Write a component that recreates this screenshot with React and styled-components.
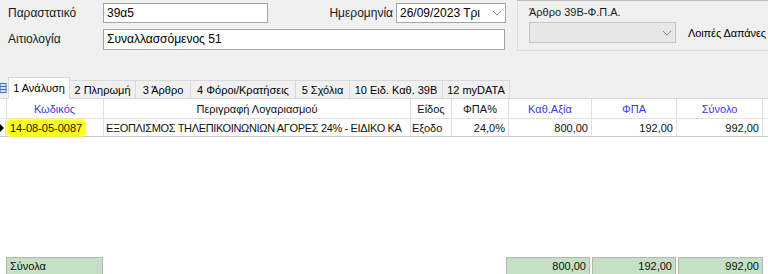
import React from "react";
import styled, { createGlobalStyle } from "styled-components";

const Global = createGlobalStyle`
  html, body { margin: 0; padding: 0; }
  body {
    background: #f0f0f0;
    font-family: "Liberation Sans", Arial, sans-serif;
    font-size: 12px;
    color: #000;
    overflow: hidden;
  }
`;

const Screen = styled.div`
  width: 768px;
  height: 274px;
  overflow: hidden;
  display: flex;
  flex-direction: column;
  background: #f0f0f0;
`;

const Top = styled.div`
  height: 76px;
  display: flex;
  align-items: flex-start;
`;

const Form = styled.div`
  width: 517px;
  flex-shrink: 0;
  padding-top: 3px;
  display: flex;
  flex-direction: column;
  gap: 6px;
`;

const FormRow = styled.div`
  display: flex;
  align-items: center;
  height: 20px;
`;

const Label = styled.span`
  box-sizing: border-box;
  width: ${(p) => p.$w || 103}px;
  padding-left: ${(p) => p.$pl ?? 8}px;
  padding-right: ${(p) => p.$pr ?? 0}px;
  text-align: ${(p) => p.$align || "left"};
  font-size: 12px;
  color: #1a1a1a;
  white-space: nowrap;
  flex-shrink: 0;
`;

const Input = styled.div`
  box-sizing: border-box;
  width: ${(p) => p.$w}px;
  height: ${(p) => p.$h || 20}px;
  flex-shrink: 0;
  background: #fff;
  border: 1px solid #a5a5a5;
  padding: 0 3px;
  display: flex;
  align-items: center;
  font-size: 12px;
  white-space: nowrap;
`;

const Combo = styled(Input)`
  justify-content: space-between;
  background: ${(p) => (p.$disabled ? "#e8e8e8" : "#fff")};
  border-color: ${(p) => (p.$disabled ? "#c4c4c4" : "#a5a5a5")};
`;

const Chevron = () => (
  <svg width="10" height="6" viewBox="0 0 10 6">
    <path d="M1 1 L5 5 L9 1" fill="none" stroke="#8a8a8a" strokeWidth="1" />
  </svg>
);

const Group = styled.div`
  flex: 1;
  min-width: 0;
  overflow: hidden;
  box-sizing: border-box;
  height: 51px;
  border-top: 1px solid #bdbdbd;
  border-left: 1px solid #dcdcdc;
  border-bottom: 1px solid #dcdcdc;
  padding: 5px 0 0 11px;
  display: flex;
  flex-direction: column;
  gap: 2px;
`;

const GroupTitle = styled.span`
  font-size: 11px;
  color: #1a1a1a;
  height: 14px;
`;

const GroupRow = styled.div`
  display: flex;
  align-items: center;
  gap: 12px;
`;

const GroupText = styled.span`
  font-size: 11px;
  letter-spacing: -0.1px;
  white-space: nowrap;
`;

const TabStrip = styled.div`
  height: 22px;
  display: flex;
  align-items: flex-end;
  border-bottom: 1px solid #d9d9d9;
`;

const TabIcon = styled.div`
  width: 8px;
  height: 20px;
  display: flex;
  align-items: center;
  overflow: hidden;
`;

const Tab = styled.div`
  box-sizing: border-box;
  width: ${(p) => p.$w}px;
  height: ${(p) => (p.$active ? 22 : 19)}px;
  margin-bottom: -1px;
  display: flex;
  align-items: center;
  justify-content: center;
  font-size: 11px;
  white-space: nowrap;
  background: ${(p) => (p.$active ? "#fff" : "#f0f0f0")};
  border: 1px solid #d9d9d9;
  border-left: ${(p) => (p.$first ? "1px solid #d9d9d9" : "none")};
  border-bottom: ${(p) => (p.$active ? "1px solid #fff" : "1px solid #d9d9d9")};
`;

const GridArea = styled.div`
  flex: 1;
  background: #fff;
  display: flex;
  flex-direction: column;
`;

const cols = "6px 98px 307px 41px 57px 83px 85px 86px 10px";

const GridRow = styled.div`
  display: grid;
  grid-template-columns: ${cols};
  height: ${(p) => p.$h}px;
  border-bottom: 1px solid ${(p) => (p.$dark ? "#c8c8c8" : "#e3e3e3")};
  box-sizing: border-box;
`;

const Cell = styled.div`
  border-right: 1px solid #e0e0e0;
  display: flex;
  align-items: center;
  justify-content: ${(p) => p.$j || "flex-start"};
  padding: 0 ${(p) => p.$pad ?? 3}px;
  font-size: 11px;
  letter-spacing: ${(p) => p.$ls || 0}px;
  color: ${(p) => (p.$blue ? "#3a3af0" : "#111")};
  white-space: nowrap;
  overflow: ${(p) => (p.$visible ? "visible" : "hidden")};
  min-width: 0;
`;

const Highlight = styled.span`
  background: #ffff1a;
  box-shadow: 0 0 2px 2px #ffff1a;
  border-radius: 3px;
  padding: 1px 2px;
  margin-left: -1px;
`;

const Arrow = styled.div`
  width: 0;
  height: 0;
  border-top: 4px solid transparent;
  border-bottom: 4px solid transparent;
  border-left: 4px solid #000;
`;

const Spacer = styled.div`
  flex: 1;
`;

const TotalsRow = styled.div`
  display: flex;
  align-items: flex-end;
  height: 17px;
  padding-left: 6px;
`;

const TotalBox = styled.div`
  box-sizing: border-box;
  width: ${(p) => p.$w}px;
  height: 17px;
  margin-left: ${(p) => p.$ml || 0}px;
  background: #c5e0c5;
  border: 1px solid #b5b5b5;
  border-bottom: none;
  display: flex;
  align-items: center;
  justify-content: ${(p) => (p.$right ? "flex-end" : "flex-start")};
  padding: 0 3px;
  font-size: 11px;
  color: #111;
`;

const GridIcon = () => (
  <svg width="8" height="10" viewBox="0 0 8 10">
    <rect x="0" y="0.5" width="6" height="9" fill="#dbe6f7" stroke="#3c6fc4" strokeWidth="1" />
    <line x1="0" y1="3.5" x2="6" y2="3.5" stroke="#3c6fc4" />
    <line x1="0" y1="6.5" x2="6" y2="6.5" stroke="#3c6fc4" />
  </svg>
);

const tabs = [
  ["2 Πληρωμή", 66],
  ["3 Άρθρο", 55],
  ["4 Φόροι/Κρατήσεις", 105],
  ["5 Σχόλια", 54],
  ["10 Ειδ. Καθ. 39Β", 93],
  ["12 myDATA", 67],
];

export default function App() {
  return (
    <>
      <Global />
      <Screen>
        <Top>
          <Form>
            <FormRow>
              <Label>Παραστατικό</Label>
              <Input $w={165}>39α5</Input>
              <Label $w={128} $align="right" $pl={0} $pr={3}>
                Ημερομηνία
              </Label>
              <Combo $w={110}>
                <span>26/09/2023 Τρι</span>
                <Chevron />
              </Combo>
            </FormRow>
            <FormRow>
              <Label>Αιτιολογία</Label>
              <Input $w={402} $h={21}>Συναλλασσόμενος 51</Input>
            </FormRow>
          </Form>
          <Group>
            <GroupTitle>Άρθρο 39Β-Φ.Π.Α.</GroupTitle>
            <GroupRow>
              <Combo $w={147} $h={21} $disabled>
                <span />
                <Chevron />
              </Combo>
              <GroupText>Λοιπές Δαπάνες</GroupText>
            </GroupRow>
          </Group>
        </Top>
        <TabStrip>
          <TabIcon>
            <GridIcon />
          </TabIcon>
          <Tab $active $first $w={62}>1 Ανάλυση</Tab>
          {tabs.map(([t, w]) => (
            <Tab key={t} $w={w}>{t}</Tab>
          ))}
        </TabStrip>
        <GridArea>
          <GridRow $h={20}>
            <Cell />
            <Cell $j="center" $blue>Κωδικός</Cell>
            <Cell $j="center">Περιγραφή Λογαριασμού</Cell>
            <Cell $j="center">Είδος</Cell>
            <Cell $j="center">ΦΠΑ%</Cell>
            <Cell $j="center" $blue>Καθ.Αξία</Cell>
            <Cell $j="center" $blue>ΦΠΑ</Cell>
            <Cell $j="center" $blue>Σύνολο</Cell>
            <Cell />
          </GridRow>
          <GridRow $h={18} $dark>
            <Cell $pad={0}>
              <Arrow />
            </Cell>
            <Cell $visible>
              <Highlight>14-08-05-0087</Highlight>
            </Cell>
            <Cell $ls={-0.35} $pad={2}>
              ΕΞΟΠΛΙΣΜΟΣ ΤΗΛΕΠΙΚΟΙΝΩΝΙΩΝ ΑΓΟΡΕΣ 24% - ΕΙΔΙΚΟ ΚΑ
            </Cell>
            <Cell $pad={1}>Εξοδο</Cell>
            <Cell $j="flex-end">24,0%</Cell>
            <Cell $j="flex-end">800,00</Cell>
            <Cell $j="flex-end">192,00</Cell>
            <Cell $j="flex-end">992,00</Cell>
            <Cell />
          </GridRow>
          <Spacer />
          <TotalsRow>
            <TotalBox $w={97}>Σύνολα</TotalBox>
            <TotalBox $w={84} $ml={403} $right>800,00</TotalBox>
            <TotalBox $w={84} $ml={2} $right>192,00</TotalBox>
            <TotalBox $w={85} $ml={2} $right>992,00</TotalBox>
          </TotalsRow>
        </GridArea>
      </Screen>
    </>
  );
}
